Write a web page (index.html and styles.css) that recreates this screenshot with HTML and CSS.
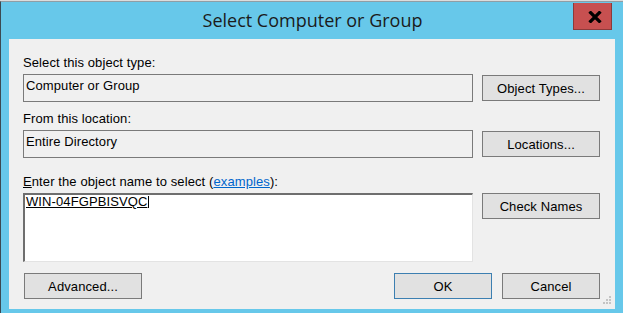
FILE: index.html
```html
<!DOCTYPE html>
<html>
<head>
<meta charset="utf-8">
<link rel="stylesheet" href="styles.css">
</head>
<body>
<div class="window">
  <div class="titlebar">
    <span class="title">Select Computer or Group</span>
    <div class="close">
      <svg width="14" height="12" viewBox="0 0 14 12"><path d="M1.5 0.5 L12.5 11.5 M12.5 0.5 L1.5 11.5" stroke="#000" stroke-width="3.2" stroke-linecap="butt"/></svg>
    </div>
  </div>
  <div class="client">
    <div class="form">
      <div class="label">Select this object type:</div>
      <div class="empty"></div>
      <div class="field">Computer or Group</div>
      <div class="btn btn-side">Object Types...</div>
      <div class="label label-gap">From this location:</div>
      <div class="empty"></div>
      <div class="field">Entire Directory</div>
      <div class="btn btn-side">Locations...</div>
      <div class="label label-gap2"><u>E</u>nter the object name to select (<a class="link">examples</a>):</div>
      <div class="empty"></div>
      <div class="area"><span class="name">WIN-04FGPBISVQC</span><span class="caret"></span></div>
      <div class="btn btn-check">Check Names</div>
    </div>
    <div class="bottom">
      <div class="btn btn-adv">Advanced...</div>
      <div class="spacer"></div>
      <div class="btn btn-small btn-default">OK</div>
      <div class="btn btn-small">Cancel</div>
    </div>
    <svg class="grip" width="9" height="9" viewBox="0 0 9 9">
      <rect x="6" y="0" width="2" height="2" fill="#c4c4c4"/>
      <rect x="3" y="3" width="2" height="2" fill="#c4c4c4"/>
      <rect x="6" y="3" width="2" height="2" fill="#c4c4c4"/>
      <rect x="0" y="6" width="2" height="2" fill="#c4c4c4"/>
      <rect x="3" y="6" width="2" height="2" fill="#c4c4c4"/>
      <rect x="6" y="6" width="2" height="2" fill="#c4c4c4"/>
    </svg>
  </div>
</div>
</body>
</html>
```
FILE: styles.css
```css
html, body {
  margin: 0;
  padding: 0;
}
body {
  background: #dcdcdc;
  width: 623px;
  height: 313px;
  overflow: hidden;
  font-family: "Liberation Sans", Arial, sans-serif;
  font-size: 13px;
  line-height: 15px;
  color: #000;
}
.window {
  box-sizing: border-box;
  margin-top: 1px;
  width: 623px;
  height: 312px;
  background: #67c8ea;
  border-top: 1px solid #8f9ea6;
  border-left: 1px solid #3c4a52;
  display: flex;
  flex-direction: column;
}
.titlebar {
  position: relative;
  height: 37px;
  flex: none;
  display: flex;
  justify-content: center;
}
.title {
  font-family: "Open Sans", "Noto Sans", sans-serif;
  font-size: 18px;
  line-height: 37px;
  color: #1b1b1b;
  padding-left: 1px;
}
.close {
  position: absolute;
  top: 1px;
  right: 11px;
  width: 39px;
  height: 27px;
  box-sizing: border-box;
  background: #c75050;
  border: 1px solid #8c3a3a;
  border-top: none;
  display: flex;
  align-items: center;
  justify-content: center;
}
.close svg {
  display: block;
  margin-left: 4px;
  margin-top: 1px;
}
.client {
  position: relative;
  box-sizing: border-box;
  margin-left: 8px;
  width: 606px;
  height: 270px;
  background: #f0f0f0;
  padding: 16px 0 10px 14px;
  letter-spacing: 0.1px;
}
.form {
  display: grid;
  grid-template-columns: 450px 118px;
  column-gap: 9px;
}
.label {
  height: 15px;
  margin-bottom: 4px;
  white-space: nowrap;
}
.label-gap { margin-top: 9px; }
.label-gap2 { margin-top: 16px; }
.link {
  color: #0066cc;
  text-decoration: underline;
}
.field {
  box-sizing: border-box;
  height: 28px;
  border: 1px solid #7a7a7a;
  background: #f0f0f0;
  padding: 3px 2px 0 2px;
}
.btn {
  box-sizing: border-box;
  height: 26px;
  background: #e1e1e1;
  border: 1px solid #7a7a7a;
  display: flex;
  align-items: center;
  justify-content: center;
  white-space: nowrap;
}
.btn-side {
  margin-top: 1px;
  align-self: start;
}
.btn-check {
  align-self: start;
}
.area {
  box-sizing: border-box;
  height: 69px;
  background: #fff;
  border-style: solid;
  border-width: 2px 1px 1px 2px;
  border-color: #6e6e6e #e3e3e3 #e3e3e3 #6e6e6e;
  padding: 0 1px;
  line-height: 13px;
  display: flex;
  align-items: flex-start;
}
.name {
  text-decoration: underline;
  color: #000;
}
.caret {
  display: inline-block;
  width: 1px;
  height: 12px;
  margin-top: 1px;
  margin-left: 1px;
  background: #000;
}
.bottom {
  display: flex;
  margin-top: 11px;
  width: 577px;
  column-gap: 10px;
}
.btn-adv {
  width: 118px;
  margin-left: 1px;
}
.spacer { flex: 1; }
.btn-small { width: 98px; }
.btn-default { border-color: #3c7fb1; }
.grip {
  position: absolute;
  right: 3px;
  bottom: 4px;
}
```
